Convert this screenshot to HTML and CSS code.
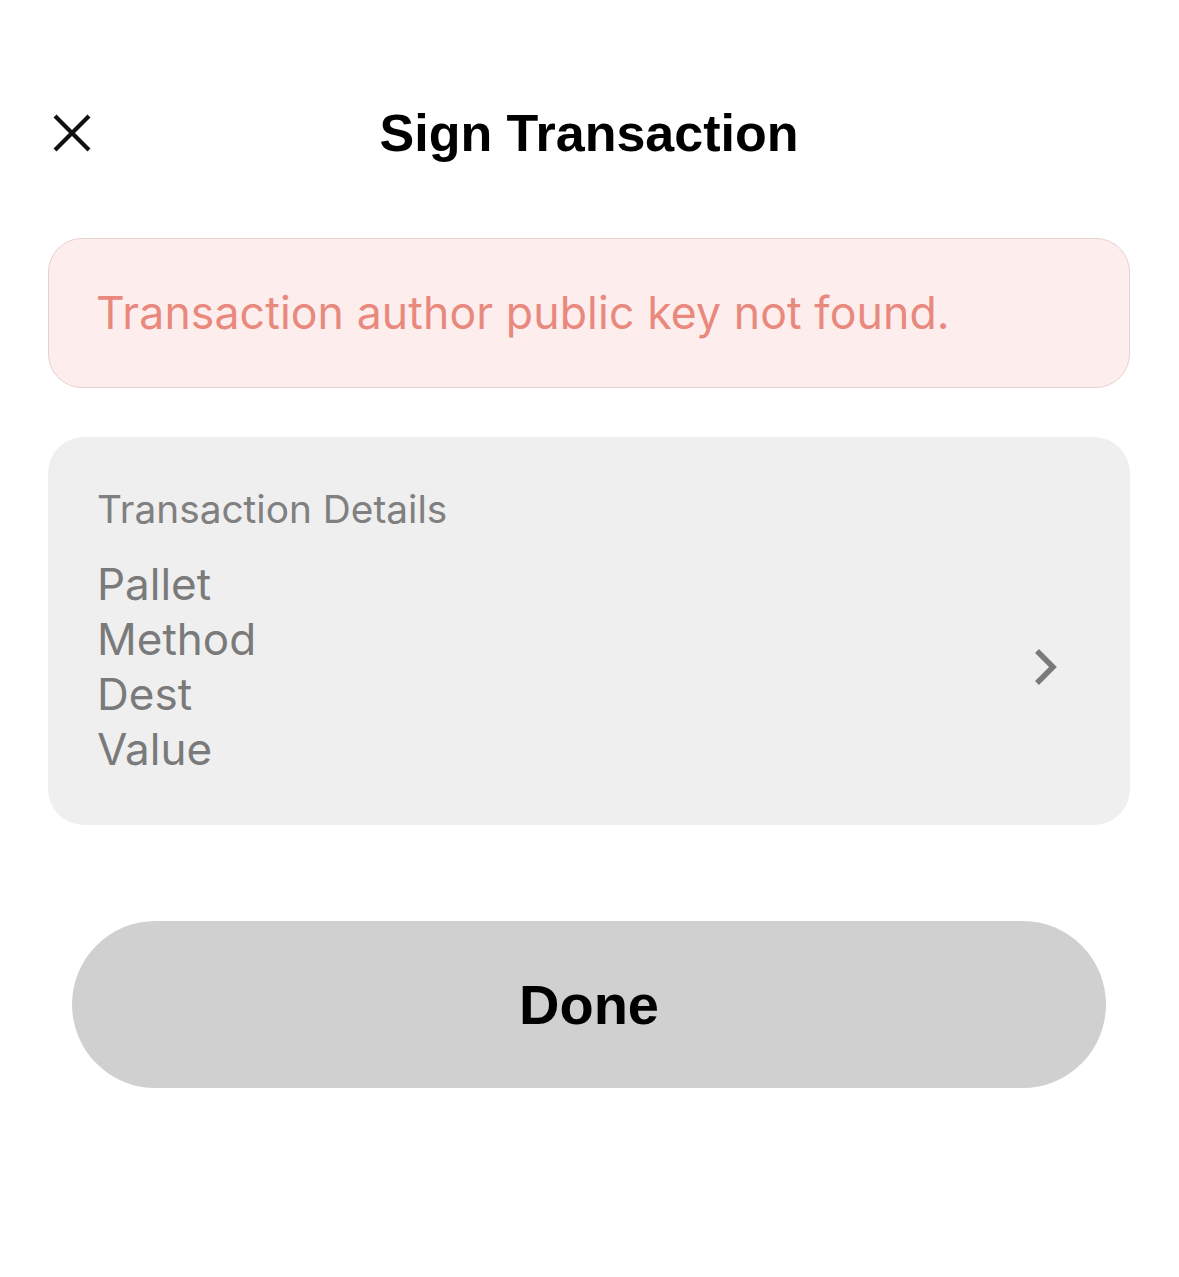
FILE: index.html
```html
<!DOCTYPE html>
<html lang="en">
<head>
<meta charset="utf-8">
<title>Sign Transaction</title>
<link rel="stylesheet" href="styles.css">
</head>
<body>
<main class="sheet">
  <header class="sheet-header">
    <button class="close-btn" aria-label="Close">
      <svg width="38" height="38" viewBox="0 0 38 38" fill="none" stroke="#111" stroke-width="4.2" stroke-linecap="butt">
        <path d="M2 2 L36 36 M36 2 L2 36"/>
      </svg>
    </button>
    <h1 class="sheet-title">Sign Transaction</h1>
  </header>

  <div class="error-box">Transaction author public key not found.</div>

  <section class="details-card">
    <div class="details-label">Transaction Details</div>
    <div class="details-body">
      <ul class="details-list">
        <li>Pallet</li>
        <li>Method</li>
        <li>Dest</li>
        <li>Value</li>
      </ul>
      <svg class="chevron" width="24" height="38" viewBox="0 0 24 38" fill="none" stroke="#7a7a7a" stroke-width="5.5">
        <path d="M4 3 L20 19 L4 35"/>
      </svg>
    </div>
  </section>

  <div class="actions">
    <button class="done-btn">Done</button>
  </div>
</main>
</body>
</html>
```

FILE: styles.css
```css
html, body {
  margin: 0;
  padding: 0;
  background: #ffffff;
}

body {
  font-family: Inter, "Noto Sans", sans-serif;
  color: #111;
}

.sheet {
  padding: 100px 49px 0 48px;
  display: flex;
  flex-direction: column;
}

.sheet-header {
  position: relative;
  height: 66px;
  display: flex;
  align-items: center;
  justify-content: center;
}

.close-btn {
  position: absolute;
  left: 5px;
  top: 14px;
  padding: 0;
  border: 0;
  background: none;
  width: 38px;
  height: 38px;
  display: flex;
}

.sheet-title {
  margin: 0;
  font-family: "Liberation Sans", Arial, sans-serif;
  font-weight: 700;
  font-size: 52px;
  line-height: 66px;
  color: #000;
}

.error-box {
  margin-top: 72px;
  box-sizing: border-box;
  height: 150px;
  border: 1px solid #e6d2d1;
  border-radius: 34px;
  background: #fdeeed;
  padding: 0 47px;
  display: flex;
  align-items: center;
  font-size: 44.6px;
  color: #e9897e;
  letter-spacing: 0.1px;
}

.details-card {
  margin-top: 49px;
  background: #efefef;
  border-radius: 36px;
  padding: 49px 73px 48px 49px;
}

.details-label {
  font-size: 38.8px;
  line-height: 46px;
  color: #808080;
}

.details-body {
  margin-top: 25px;
  display: flex;
  align-items: center;
  justify-content: space-between;
}

.details-list {
  list-style: none;
  margin: 0;
  padding: 0;
  font-size: 44px;
  line-height: 55px;
  color: #7a7a7a;
}

.chevron {
  display: block;
}

.actions {
  margin-top: 96px;
  padding: 0 24px;
}

.done-btn {
  width: 100%;
  height: 167px;
  border: 0;
  border-radius: 84px;
  background: #d0d0d0;
  font-family: "Liberation Sans", Arial, sans-serif;
  font-weight: 700;
  font-size: 56px;
  color: #000;
  padding: 0;
}
```
